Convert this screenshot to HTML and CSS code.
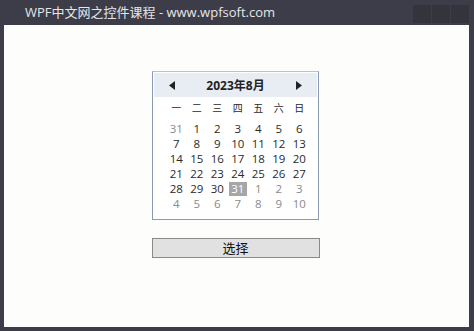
FILE: index.html
```html
<!DOCTYPE html>
<html lang="zh">
<head>
  <meta charset="UTF-8" />
  <title>WPF中文网之控件课程</title>
  <link rel="stylesheet" href="styles.css">
</head>
<body>
  <div class="window">
    <div class="titlebar">
      <span class="title">WPF中文网之控件课程 - www.wpfsoft.com</span>
      <div class="caption-buttons">
        <span class="cap"></span><span class="cap"></span><span class="cap"></span>
      </div>
    </div>
    <div class="client">
      <div class="calendar">
        <div class="cal-head">
          <svg class="arrow" width="6" height="9" viewBox="0 0 6 9"><path d="M6 0 L0 4.5 L6 9 Z" fill="#222"/></svg>
          <span class="month">2023年8月</span>
          <svg class="arrow" width="6" height="9" viewBox="0 0 6 9"><path d="M0 0 L6 4.5 L0 9 Z" fill="#222"/></svg>
        </div>
        <div class="grid">
          <span class="dow">一</span><span class="dow">二</span><span class="dow">三</span><span class="dow">四</span><span class="dow">五</span><span class="dow">六</span><span class="dow">日</span>
          <span class="out">31</span><span>1</span><span>2</span><span>3</span><span>4</span><span>5</span><span>6</span>
          <span>7</span><span>8</span><span>9</span><span>10</span><span>11</span><span>12</span><span>13</span>
          <span>14</span><span>15</span><span>16</span><span>17</span><span>18</span><span>19</span><span>20</span>
          <span>21</span><span>22</span><span>23</span><span>24</span><span>25</span><span>26</span><span>27</span>
          <span>28</span><span>29</span><span>30</span><span class="sel">31</span><span class="out">1</span><span class="out">2</span><span class="out">3</span>
          <span class="out">4</span><span class="out">5</span><span class="out">6</span><span class="out">7</span><span class="out">8</span><span class="out">9</span><span class="out">10</span>
        </div>
      </div>
      <button class="pick">选择</button>
    </div>
  </div>
</body>
</html>
```
FILE: styles.css
```css
html, body {
  margin: 0;
  padding: 0;
}

body {
  width: 474px;
  height: 331px;
  background: #3c3d48;
  font-family: "Open Sans", "Noto Sans CJK SC", sans-serif;
  overflow: hidden;
}

.window {
  height: 331px;
  display: flex;
  flex-direction: column;
  padding: 0 5px 4px 4px;
  box-sizing: border-box;
}

.titlebar {
  height: 25px;
  display: flex;
  align-items: center;
  justify-content: space-between;
  flex-shrink: 0;
}

.title {
  color: #e6e6e8;
  font-size: 13px;
  margin-left: 21px;
  margin-top: -3px;
}

.caption-buttons {
  display: flex;
  gap: 1px;
  align-self: flex-start;
  margin-top: 5px;
}

.cap {
  width: 18px;
  height: 18px;
  background: #34343c;
}

.client {
  flex: 1;
  background: #fdfdfb;
  display: flex;
  flex-direction: column;
  align-items: center;
  padding-top: 46px;
  padding-right: 2px;
}

.calendar {
  width: 167px;
  height: 149px;
  border: 1px solid #8a9bb0;
  border-top-color: #b8c2cf;
  background: #fff;
  box-sizing: border-box;
}

.cal-head {
  height: 24px;
  background: #e8edf3;
  display: flex;
  align-items: center;
  justify-content: space-between;
  padding: 0 15px 0 15px;
  margin: 1px;
}

.month {
  font-size: 12px;
  font-weight: bold;
  color: #222;
}

.grid {
  display: grid;
  grid-template-columns: repeat(7, 20.5px);
  grid-template-rows: 22px repeat(6, 15px);
  padding: 1px 0 0 13px;
  font-size: 11.5px;
  line-height: 14px;
  color: #2a2a2a;
}

.grid span {
  display: flex;
  align-items: center;
  justify-content: center;
  overflow: hidden;
}

.grid .dow {
  font-size: 10px;
  padding-bottom: 4px;
}

.grid .out {
  color: #8a8a8a;
}

.grid .sel {
  background: #a6a6a6;
  color: #fff;
  margin: 1px 1px 0 1px;
}

.pick {
  margin-top: 18px;
  width: 168px;
  height: 20px;
  background: #e1e1e1;
  border: 1px solid #8a8a8a;
  font-family: "Noto Sans CJK SC", sans-serif;
  font-size: 13px;
  color: #111;
  padding: 0;
  line-height: 18px;
}
```
